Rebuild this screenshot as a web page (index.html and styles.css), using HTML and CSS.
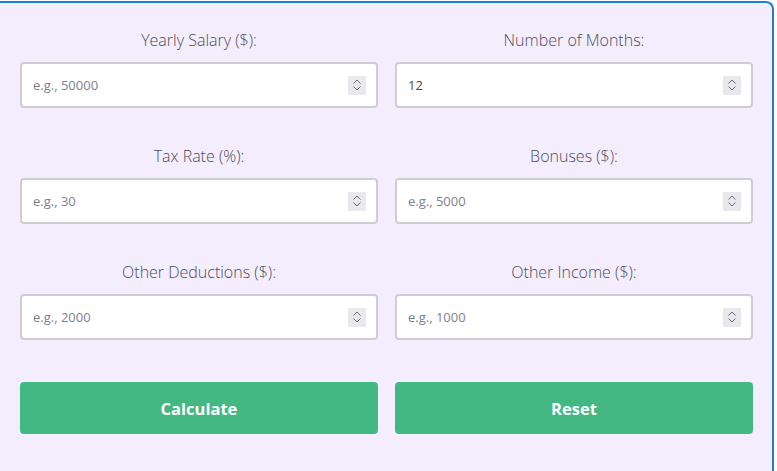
FILE: index.html
```html
<!DOCTYPE html>
<html lang="en">
<head>
<meta charset="utf-8">
<title>Salary Calculator</title>
<link rel="stylesheet" href="styles.css">
</head>
<body>
<div class="card">
  <div class="grid">
    <div class="field">
      <label class="label" for="salary">Yearly Salary ($):</label>
      <div class="box"><input id="salary" class="input" type="number" placeholder="e.g., 50000"><span class="spin"><svg viewBox="0 0 10 14" width="10" height="14"><path d="M1.5 5.5 L5 2 L8.5 5.5 M1.5 8.5 L5 12 L8.5 8.5" fill="none" stroke="#6b6b75" stroke-width="1"/></svg></span></div>
    </div>
    <div class="field">
      <label class="label" for="months">Number of Months:</label>
      <div class="box"><input id="months" class="input" type="number" value="12"><span class="spin"><svg viewBox="0 0 10 14" width="10" height="14"><path d="M1.5 5.5 L5 2 L8.5 5.5 M1.5 8.5 L5 12 L8.5 8.5" fill="none" stroke="#6b6b75" stroke-width="1"/></svg></span></div>
    </div>
    <div class="field">
      <label class="label" for="tax">Tax Rate (%):</label>
      <div class="box"><input id="tax" class="input" type="number" placeholder="e.g., 30"><span class="spin"><svg viewBox="0 0 10 14" width="10" height="14"><path d="M1.5 5.5 L5 2 L8.5 5.5 M1.5 8.5 L5 12 L8.5 8.5" fill="none" stroke="#6b6b75" stroke-width="1"/></svg></span></div>
    </div>
    <div class="field">
      <label class="label" for="bonus">Bonuses ($):</label>
      <div class="box"><input id="bonus" class="input" type="number" placeholder="e.g., 5000"><span class="spin"><svg viewBox="0 0 10 14" width="10" height="14"><path d="M1.5 5.5 L5 2 L8.5 5.5 M1.5 8.5 L5 12 L8.5 8.5" fill="none" stroke="#6b6b75" stroke-width="1"/></svg></span></div>
    </div>
    <div class="field">
      <label class="label" for="ded">Other Deductions ($):</label>
      <div class="box"><input id="ded" class="input" type="number" placeholder="e.g., 2000"><span class="spin"><svg viewBox="0 0 10 14" width="10" height="14"><path d="M1.5 5.5 L5 2 L8.5 5.5 M1.5 8.5 L5 12 L8.5 8.5" fill="none" stroke="#6b6b75" stroke-width="1"/></svg></span></div>
    </div>
    <div class="field">
      <label class="label" for="inc">Other Income ($):</label>
      <div class="box"><input id="inc" class="input" type="number" placeholder="e.g., 1000"><span class="spin"><svg viewBox="0 0 10 14" width="10" height="14"><path d="M1.5 5.5 L5 2 L8.5 5.5 M1.5 8.5 L5 12 L8.5 8.5" fill="none" stroke="#6b6b75" stroke-width="1"/></svg></span></div>
    </div>
  </div>
  <div class="actions">
    <button class="btn" type="button">Calculate</button>
    <button class="btn" type="button">Reset</button>
  </div>
</div>
</body>
</html>
```
FILE: styles.css
```css
html, body {
  margin: 0;
  padding: 0;
  background: #ffffff;
  font-family: "Segoe UI", "Open Sans", "Noto Sans", sans-serif;
}
.card {
  width: 776px;
  height: 470px;
  margin: 1px 0 0 -2px;
  box-sizing: border-box;
  background: #f4edfd;
  border: 2px solid #1f7fd4;
  border-bottom: none;
  border-radius: 0 8px 0 0;
  padding: 26px 20px 0 20px;
}
.grid {
  display: grid;
  grid-template-columns: 358px 358px;
  column-gap: 17px;
  row-gap: 37px;
}
.field {
  display: flex;
  flex-direction: column;
}
.label {
  display: block;
  text-align: center;
  font-size: 16px;
  font-weight: 300;
  line-height: 22px;
  color: #4d4d57;
  margin-bottom: 11px;
}
.box {
  display: flex;
  align-items: center;
  height: 46px;
  box-sizing: border-box;
  background: #ffffff;
  border: 2px solid #cfccd4;
  border-radius: 4px;
  padding: 0 10px 0 11px;
}
.input {
  flex: 1;
  min-width: 0;
  border: none;
  outline: none;
  background: transparent;
  font-family: inherit;
  font-size: 13px;
  color: #4a4a55;
  padding: 0;
  -moz-appearance: textfield;
}
.input::-webkit-outer-spin-button,
.input::-webkit-inner-spin-button {
  -webkit-appearance: none;
  margin: 0;
}
.input::placeholder {
  color: #7d7f8c;
}
.spin {
  display: flex;
  align-items: center;
  justify-content: center;
  width: 18px;
  height: 19px;
  background: #e9e8ed;
}
.actions {
  display: grid;
  grid-template-columns: 358px 358px;
  column-gap: 17px;
  margin-top: 42px;
}
.btn {
  height: 52px;
  border: none;
  border-radius: 4px;
  background: #44b882;
  color: #ffffff;
  font-family: inherit;
  font-weight: 700;
  font-size: 16.5px;
}
```
